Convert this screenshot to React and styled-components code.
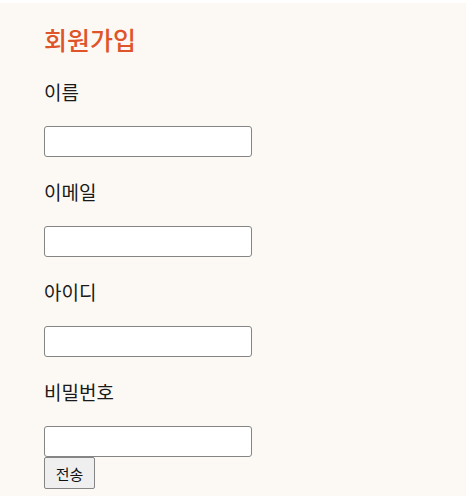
import styled, { createGlobalStyle } from "styled-components";

const GlobalStyle = createGlobalStyle`
  body {
    margin: 0;
    background: #ffffff;
    font-family: "Noto Sans CJK KR", "Noto Sans", sans-serif;
  }
`;

const Page = styled.div`
  box-sizing: border-box;
  margin: 3px 8px 3px 0;
  min-height: calc(100vh - 6px);
  background: #fcf9f4;
  padding: 21px 0 0 44px;
`;

const Title = styled.h2`
  margin: 0 0 23px;
  font-size: 25px;
  line-height: 30px;
  font-weight: 500;
  color: #df5429;
`;

const Form = styled.form`
  display: flex;
  flex-direction: column;
  align-items: flex-start;
`;

const Field = styled.div`
  display: flex;
  flex-direction: column;
  align-items: flex-start;
  margin-bottom: ${({ $last }) => ($last ? "0" : "20px")};
`;

const Label = styled.label`
  font-size: 19px;
  line-height: 30px;
  color: #1a1a1a;
  margin-bottom: 19px;
`;

const Input = styled.input`
  box-sizing: border-box;
  width: 208px;
  height: 31px;
  border: 1px solid #858585;
  border-radius: 3px;
  background: #ffffff;
  padding: 0 6px;
  margin: 0;
`;

const Button = styled.button`
  box-sizing: border-box;
  width: 51px;
  height: 32px;
  margin: 0;
  border: 1px solid #858585;
  border-radius: 2px;
  background: #efefef;
  font-family: "Noto Sans CJK KR", sans-serif;
  font-size: 15px;
  color: #111;
  padding: 0;
`;

const fields = ["이름", "이메일", "아이디", "비밀번호"];

export default function App() {
  return (
    <>
      <GlobalStyle />
      <Page>
        <Title>회원가입</Title>
        <Form onSubmit={(e) => e.preventDefault()}>
          {fields.map((f, i) => (
            <Field key={f} $last={i === fields.length - 1}>
              <Label>{f}</Label>
              <Input type={f === "비밀번호" ? "password" : "text"} />
            </Field>
          ))}
          <Button type="submit">전송</Button>
        </Form>
      </Page>
    </>
  );
}
